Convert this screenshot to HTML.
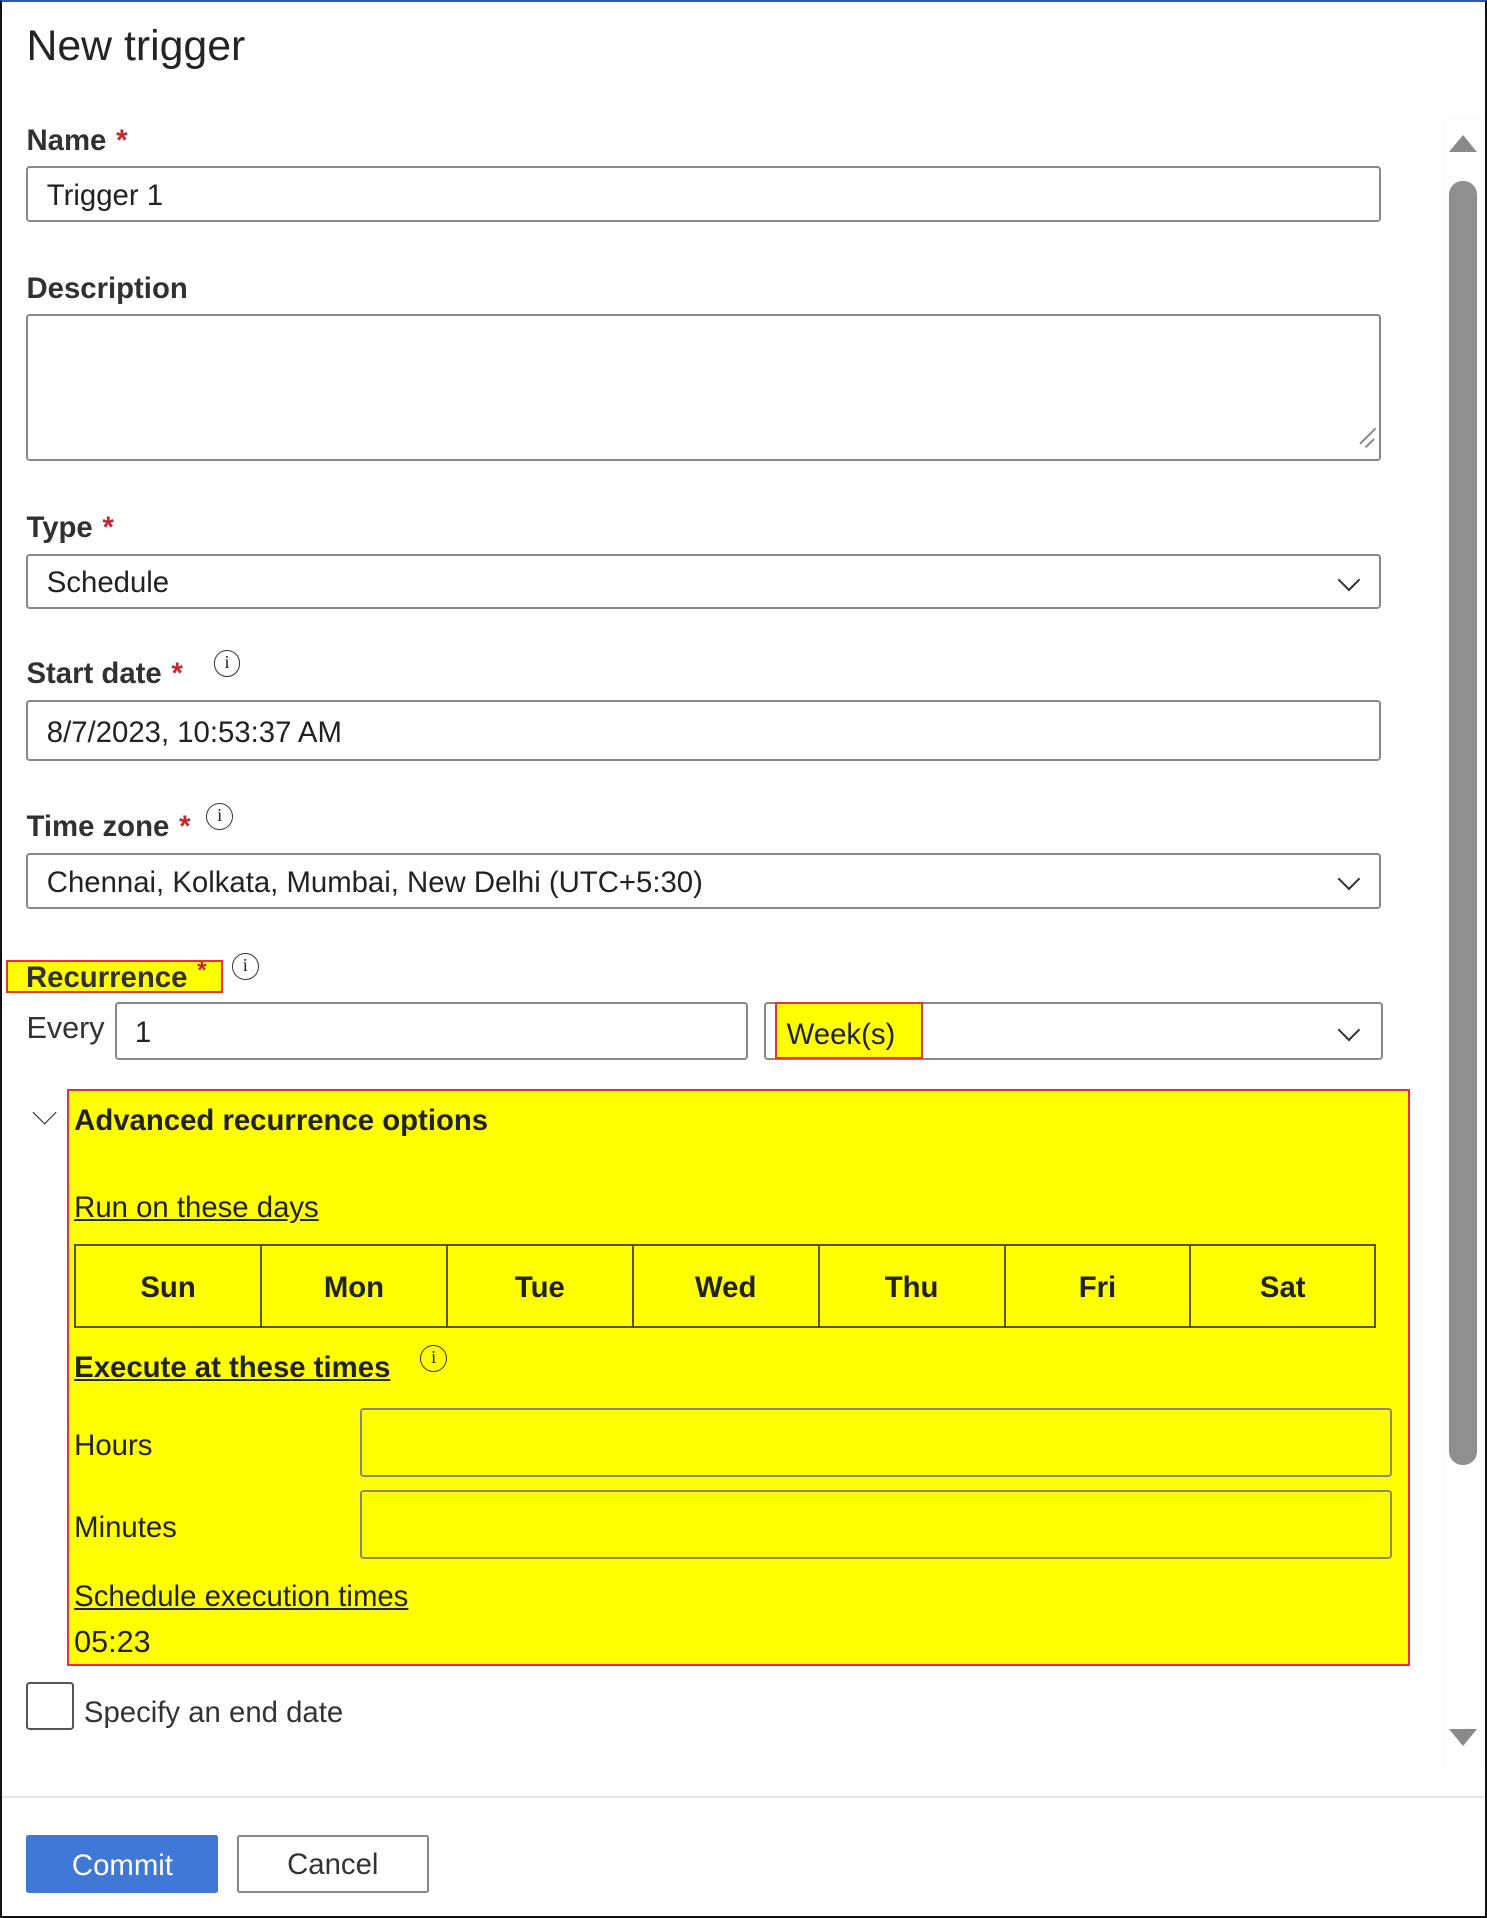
<!DOCTYPE html>
<html><head><meta charset="utf-8"><style>
*{box-sizing:border-box;margin:0;padding:0}
html,body{width:1487px;height:1918px;overflow:hidden;background:#fff}
#w{zoom:1.2229;width:1216px;height:1568px;position:relative;border:2px solid #111;border-top-color:#2a5caa;font-family:"Liberation Sans",sans-serif;color:#222}
.a{position:absolute}
.lbl{font-size:24px;font-weight:600;color:#323130;margin-top:2px}
.req{color:#c4262e;margin-left:8px}
.inp{position:absolute;border:2px solid #8a8886;border-radius:3px;font-size:24px;padding-left:15px;padding-top:3px;display:flex;align-items:center;background:#fff}
.chev{position:absolute;width:13px;height:13px;border-right:2px solid #333;border-bottom:2px solid #333;transform:rotate(45deg)}
.info{position:absolute;width:22px;height:22px;border:1.5px solid #333;border-radius:50%;font-size:15px;text-align:center;line-height:19px;font-family:"Liberation Serif",serif}
.u{text-decoration:underline;font-size:24px}
td{border:2px solid #5a5400;text-align:center;font-weight:700;font-size:24px;width:152px;height:67px;padding-top:3px}
</style></head><body><div id="w">
<div class="a" style="left:20px;top:16px;font-size:35px;font-weight:500;color:#252423">New trigger</div>
<div class="a lbl" style="left:20px;top:98px">Name<span class="req">*</span></div>
<div class="inp" style="left:20px;top:134px;width:1108px;height:46px">Trigger 1</div>
<div class="a lbl" style="left:20px;top:219px">Description</div>
<div class="inp" style="left:20px;top:255px;width:1108px;height:120px"></div>
<div class="a" style="left:1108px;top:354px;width:18px;height:2px;background:#888;transform:rotate(-45deg)"></div>
<div class="a" style="left:1114px;top:360px;width:10px;height:2px;background:#888;transform:rotate(-45deg)"></div>
<div class="a lbl" style="left:20px;top:414px">Type<span class="req">*</span></div>
<div class="inp" style="left:20px;top:451px;width:1108px;height:45px">Schedule</div>
<div class="chev" style="left:1095px;top:466px"></div>
<div class="a lbl" style="left:20px;top:534px">Start date<span class="req">*</span></div>
<div class="info" style="left:173px;top:530px">i</div>
<div class="inp" style="left:20px;top:571px;width:1108px;height:50px">8/7/2023, 10:53:37 AM</div>
<div class="a lbl" style="left:20px;top:659px">Time zone<span class="req">*</span></div>
<div class="info" style="left:167px;top:655px">i</div>
<div class="inp" style="left:20px;top:696px;width:1108px;height:46px">Chennai, Kolkata, Mumbai, New Delhi (UTC+5:30)</div>
<div class="chev" style="left:1095px;top:711px"></div>
<div class="a lbl" style="left:3px;top:781px;width:178px;height:27px;background:#ff0;border:2px solid #e8303a;padding-left:15px;line-height:26px">Recurrence<span class="req" style="font-size:20px;vertical-align:top;line-height:14px">*</span></div>
<div class="info" style="left:188px;top:778px">i</div>
<div class="a" style="left:20px;top:825px;font-size:25px;color:#333">Every</div>
<div class="inp" style="left:92px;top:818px;width:518px;height:47px">1</div>
<div class="inp" style="left:623px;top:818px;width:506px;height:47px"></div>
<div class="a" style="left:632px;top:818px;width:121px;height:46px;background:#ff0;border:2px solid #e8303a;font-size:24px;padding:11px 0 0 8px">Week(s)</div>
<div class="chev" style="left:1095px;top:834px"></div>
<div class="a" style="left:53px;top:889px;width:1098px;height:472px;background:#ff0;border:2px solid #e8303a"></div>
<div class="chev" style="left:28px;top:901px;width:14px;height:14px;border-color:#222;border-width:0 1.5px 1.5px 0"></div>
<div class="a" style="left:59px;top:901px;font-size:24px;font-weight:700;color:#222">Advanced recurrence options</div>
<div class="a u" style="left:59px;top:972px">Run on these days</div>
<table class="a" style="left:59px;top:1016px;border-collapse:collapse"><tr><td>Sun</td><td>Mon</td><td>Tue</td><td>Wed</td><td>Thu</td><td>Fri</td><td style="width:151px">Sat</td></tr></table>
<div class="a u" style="left:59px;top:1103px;font-weight:700">Execute at these times</div>
<div class="info" style="left:342px;top:1098px">i</div>
<div class="a" style="left:59px;top:1167px;font-size:24px">Hours</div>
<div class="a" style="left:293px;top:1150px;width:844px;height:56px;border:2px solid #8a8a70;border-radius:3px"></div>
<div class="a" style="left:59px;top:1234px;font-size:24px">Minutes</div>
<div class="a" style="left:293px;top:1217px;width:844px;height:56px;border:2px solid #8a8a70;border-radius:3px"></div>
<div class="a u" style="left:59px;top:1290px">Schedule execution times</div>
<div class="a" style="left:59px;top:1327px;font-size:25px">05:23</div>
<div class="a" style="left:20px;top:1374px;width:39px;height:39px;border:2px solid #555;border-radius:3px"></div>
<div class="a" style="left:67px;top:1385px;font-size:24px;color:#333">Specify an end date</div>
<div class="a" style="left:1178px;top:92px;width:34px;height:1353px;background:#fdfdfd"></div>
<div class="a" style="left:1183px;top:109px;width:0;height:0;border-left:12px solid transparent;border-right:12px solid transparent;border-bottom:14px solid #8a8a8a"></div>
<div class="a" style="left:1183px;top:146px;width:23px;height:1050px;background:#8f8f8f;border-radius:11px"></div>
<div class="a" style="left:1183px;top:1412px;width:0;height:0;border-left:12px solid transparent;border-right:12px solid transparent;border-top:14px solid #8a8a8a"></div>
<div class="a" style="left:0;top:1467px;width:1212px;height:2px;background:#e4e4e4"></div>
<div class="a" style="left:20px;top:1499px;width:157px;height:47px;background:#3f78d6;border-radius:2px;color:#fff;font-size:24px;text-align:center;line-height:50px">Commit</div>
<div class="a" style="left:192px;top:1499px;width:157px;height:47px;border:2px solid #8a8886;border-radius:2px;color:#333;font-size:24px;text-align:center;line-height:46px">Cancel</div>
</div></body></html>
